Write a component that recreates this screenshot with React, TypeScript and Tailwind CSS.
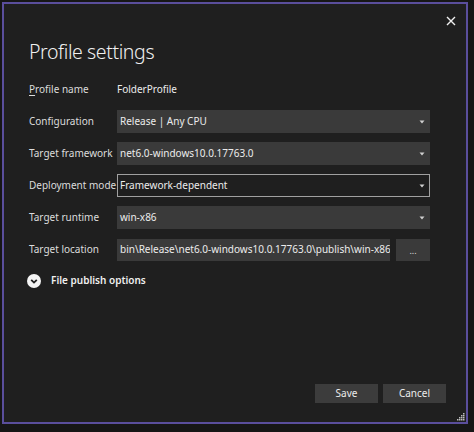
import React from "react";

const font = { fontFamily: '"Noto Sans", "Open Sans", sans-serif' };

function Arrow() {
  return (
    <svg width="6" height="4" viewBox="0 0 6 4" className="shrink-0">
      <path d="M0.5 0.5 H5.5 L3 3.5 Z" fill="#d0d0d0" />
    </svg>
  );
}

function Select({ value, focused }: { value: string; focused?: boolean }) {
  return (
    <div
      className={
        focused
          ? "flex h-[23px] min-w-0 flex-1 items-center justify-between border border-[#a0a0a0] bg-[#1f1f1f] pl-[2px] pr-[4px]"
          : "flex h-[23px] min-w-0 flex-1 items-center justify-between bg-[#3a3a3a] pl-[3px] pr-[5px]"
      }
    >
      <span className="text-[10px] text-[#ececec]">{value}</span>
      <Arrow />
    </div>
  );
}

function Row({ label, children }: { label: React.ReactNode; children: React.ReactNode }) {
  return (
    <div className="flex h-[23px] items-center">
      <div className="w-[88px] shrink-0 whitespace-nowrap text-[10px] text-[#dcdcdc]">{label}</div>
      {children}
    </div>
  );
}

export default function App() {
  return (
    <div className="h-[432px] w-[474px] bg-[#161616] pl-[2px] pt-[2px]" style={font}>
      <div className="relative flex h-[422px] w-[466px] flex-col border-2 border-[#5a4e9c] bg-[#1f1f1f]">
        <div className="flex h-[34px] justify-end pr-[10px] pt-[12px]">
          <svg width="10" height="10" viewBox="0 0 10 10">
            <path d="M1 1 L9 9 M9 1 L1 9" stroke="#f0f0f0" strokeWidth="1.4" />
          </svg>
        </div>
        <div className="pl-[25px] text-[19.5px] font-light leading-[28px] tracking-[-0.02em] text-[#f0f0f0]">
          Profile settings
        </div>
        <div className="mt-[12px] flex flex-col gap-[9px] pl-[25px] pr-[36px]">
          <Row label={<><span className="underline underline-offset-2">P</span>rofile name</>}>
            <span className="text-[10px] text-[#ececec]">FolderProfile</span>
          </Row>
          <Row label="Configuration">
            <Select value="Release | Any CPU" />
          </Row>
          <Row label="Target framework">
            <Select value="net6.0-windows10.0.17763.0" />
          </Row>
          <Row label="Deployment mode">
            <Select value="Framework-dependent" focused />
          </Row>
          <Row label="Target runtime">
            <Select value="win-x86" />
          </Row>
          <Row label="Target location">
            <div className="flex h-[22px] min-w-0 flex-1 items-center gap-[6px]">
              <div className="flex h-full min-w-0 flex-1 items-center overflow-hidden bg-[#3a3a3a] pl-[3px]">
                <span className="whitespace-nowrap text-[10px] text-[#ececec]">
                  bin\Release\net6.0-windows10.0.17763.0\publish\win-x86\PublishFolder
                </span>
              </div>
              <div className="flex h-full w-[34px] shrink-0 items-end justify-center bg-[#3a3a3a] pb-[6px] text-[9px] leading-none text-[#dcdcdc]">
                ...
              </div>
            </div>
          </Row>
        </div>
        <div className="mt-[12px] flex items-center gap-[10px] pl-[23px]">
          <svg width="14" height="14" viewBox="0 0 14 14">
            <circle cx="7" cy="7" r="7" fill="#f4f4f4" />
            <path d="M4.2 5.8 L7 8.6 L9.8 5.8" stroke="#1f1f1f" strokeWidth="1.8" fill="none" />
          </svg>
          <span className="text-[10px] font-semibold text-[#f0f0f0]">File publish options</span>
        </div>
        <div className="flex-1" />
        <div className="flex justify-end gap-[5px] pb-[19px] pr-[20px]">
          <button className="h-[19px] w-[63px] bg-[#3c3c3c] text-[10px] text-[#ececec]">Save</button>
          <button className="h-[19px] w-[63px] bg-[#3c3c3c] text-[10px] text-[#ececec]">Cancel</button>
        </div>
        <svg className="absolute bottom-[1px] right-[1px]" width="9" height="9" viewBox="0 0 9 9">
          <rect x="7" y="1" width="1.5" height="1.5" fill="#bcbcbc" />
          <rect x="5" y="3" width="1.5" height="1.5" fill="#bcbcbc" />
          <rect x="7" y="3" width="1.5" height="1.5" fill="#bcbcbc" />
          <rect x="3" y="5" width="1.5" height="1.5" fill="#bcbcbc" />
          <rect x="5" y="5" width="1.5" height="1.5" fill="#bcbcbc" />
          <rect x="7" y="5" width="1.5" height="1.5" fill="#bcbcbc" />
          <rect x="1" y="7" width="1.5" height="1.5" fill="#bcbcbc" />
          <rect x="3" y="7" width="1.5" height="1.5" fill="#bcbcbc" />
          <rect x="5" y="7" width="1.5" height="1.5" fill="#bcbcbc" />
          <rect x="7" y="7" width="1.5" height="1.5" fill="#bcbcbc" />
        </svg>
      </div>
    </div>
  );
}
